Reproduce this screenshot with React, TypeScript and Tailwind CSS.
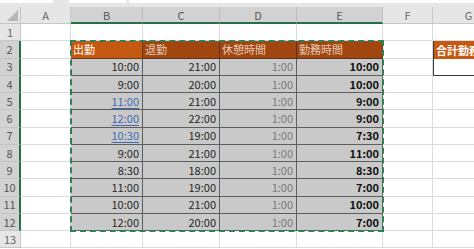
const rows = [
  ["10:00", "21:00", "1:00", "10:00"],
  ["9:00", "20:00", "1:00", "10:00"],
  ["11:00", "21:00", "1:00", "9:00"],
  ["12:00", "22:00", "1:00", "9:00"],
  ["10:30", "19:00", "1:00", "7:30"],
  ["9:00", "21:00", "1:00", "11:00"],
  ["8:30", "18:00", "1:00", "8:30"],
  ["11:00", "19:00", "1:00", "7:00"],
  ["10:00", "21:00", "1:00", "10:00"],
  ["12:00", "20:00", "1:00", "7:00"],
]

const linkRows = [2, 3, 4]
const letters = ["A", "B", "C", "D", "E", "F", "G"]

const RowHead = ({ n, selected }: { n: number; selected: boolean }) => (
  <div
    className={
      selected
        ? "flex items-center justify-center border-b border-r-2 border-b-[#c4c4c4] border-r-[#217346] bg-[#d2d2d2] text-[11px] text-[#555]"
        : "flex items-center justify-center border-b border-r border-[#c8c8c8] bg-[#e6e6e6] text-[11px] text-[#666]"
    }
  >
    {n}
  </div>
)

const Blank = () => <div className="border-b border-r border-[#dadada] bg-white" />

export default function App() {
  return (
    <div
      className="h-[249px] w-[474px] overflow-hidden bg-white"
      style={{ fontFamily: '"Noto Sans CJK JP", "Noto Sans", sans-serif' }}
    >
      <div className="flex h-[7px] items-start gap-[3px] bg-[#e6e6e6]">
        <div className="h-[3px] w-[53px] bg-white" />
        <div className="ml-[13px] h-[3px] w-[57px] bg-white" />
        <div className="h-[3px] flex-1 bg-white" />
      </div>

      <div className="relative grid grid-cols-[21px_50px_72px_77px_77px_86px_50px_72px] grid-rows-[17px_repeat(13,17.25px)]">
        {/* column headers */}
        <div className="relative border-b border-r border-[#c4c4c4] bg-[#e6e6e6]">
          <svg className="absolute bottom-[2px] right-[2px]" width="11" height="11" viewBox="0 0 11 11">
            <polygon points="11,0 11,11 0,11" fill="#b6b6b6" />
          </svg>
        </div>
        {letters.map((l, i) => {
          const sel = i >= 1 && i <= 4
          return (
            <div
              key={l}
              className={
                sel
                  ? "flex items-center justify-center border-b-2 border-r border-b-[#217346] border-r-[#bdbdbd] bg-[#d2d2d2] pt-[1px] text-[11px] text-[#555]"
                  : "flex items-center justify-center border-b border-r border-[#c8c8c8] bg-[#e6e6e6] text-[11px] text-[#666]"
              }
            >
              {l}
            </div>
          )
        })}

        {/* row 1 */}
        <RowHead n={1} selected={false} />
        {letters.map((l) => (
          <Blank key={l} />
        ))}

        {/* row 2 */}
        <RowHead n={2} selected />
        <Blank />
        <div className="flex items-center border-b border-r border-[#6a3a1c] bg-[#c65911] pl-[2px] text-[11px] text-white">
          出勤
        </div>
        {["退勤", "休憩時間", "勤務時間"].map((t) => (
          <div
            key={t}
            className="flex items-center border-b border-r border-[#5a3420] bg-[#a2460f] pl-[2px] text-[11px] text-[#e6cbbb]"
          >
            {t}
          </div>
        ))}
        <Blank />
        <div className="flex items-center overflow-hidden whitespace-nowrap border-l border-[#3a3a3a] bg-[#c65911] pl-[2px] text-[11px] font-bold text-white">
          合計勤務時間
        </div>

        {/* data rows */}
        {rows.map((r, i) => (
          <div key={i} className="contents">
            <RowHead n={i + 3} selected />
            <Blank />
            <div className="flex items-center justify-end border-b border-r border-[#5e5e5e] bg-[#c9c9c9] pr-[3px] text-[11px] text-[#262626]">
              {linkRows.includes(i) ? (
                <span className="text-[#4169b0] underline decoration-[#4169b0] underline-offset-2">{r[0]}</span>
              ) : (
                r[0]
              )}
            </div>
            <div className="flex items-center justify-end border-b border-r border-[#5e5e5e] bg-[#c9c9c9] pr-[3px] text-[11px] text-[#262626]">
              {r[1]}
            </div>
            <div className="flex items-center justify-end border-b border-r border-[#5e5e5e] bg-[#c9c9c9] pr-[3px] text-[11px] text-[#7a7a7a]">
              {r[2]}
            </div>
            <div className="flex items-center justify-end border-b border-r border-[#5e5e5e] bg-[#c9c9c9] pr-[3px] text-[11px] font-bold text-[#111]">
              {r[3]}
            </div>
            <Blank />
            {i === 0 ? (
              <div className="border-b border-l border-[#3a3a3a] bg-white" />
            ) : (
              <Blank />
            )}
          </div>
        ))}

        {/* row 13 */}
        <RowHead n={13} selected={false} />
        {letters.map((l) => (
          <Blank key={l} />
        ))}

        {/* copy marquee */}
        <div className="pointer-events-none absolute -inset-[1px] col-start-3 col-end-7 row-start-3 row-end-14 border-2 border-dashed border-[#2f8057]" />
      </div>
    </div>
  )
}
